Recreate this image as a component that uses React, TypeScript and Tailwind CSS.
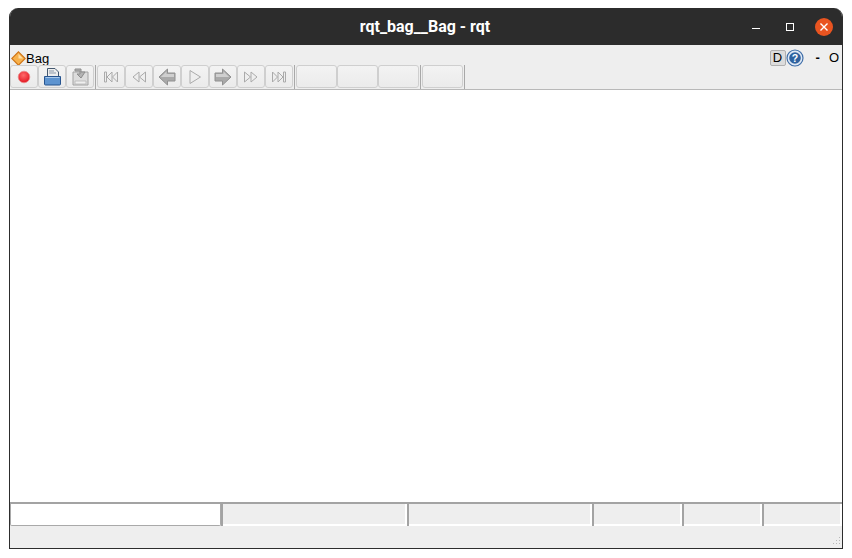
const ToolButton = ({ children, className = 'w-[28px]' }: { children?: React.ReactNode; className?: string }) => (
  <div className={`${className} h-[23px] flex items-center justify-center rounded-[3px] border border-[#cfcfcf] bg-gradient-to-b from-[#f3f3f3] to-[#ebebeb]`}>
    {children}
  </div>
);

const Separator = () => <div className="w-px h-[24px] ml-px mr-px bg-[#a8a8a8]" />;

const Bag = () => (
  <svg width="15" height="15" viewBox="0 0 15 15">
    <path d="M7.5 .8 L14.2 7.5 L7.5 14.2 L.8 7.5 Z" fill="#f7b14c" stroke="#d0761a" strokeWidth="1.2" />
    <path d="M7.5 3 L12 7.5 L7.5 7.5 Z" fill="#fde0a8" />
  </svg>
);

const Record = () => (
  <svg width="14" height="14" viewBox="0 0 14 14">
    <defs>
      <radialGradient id="rec" cx="0.45" cy="0.35" r="0.7">
        <stop offset="0" stopColor="#ff6a6a" />
        <stop offset="1" stopColor="#e0101c" />
      </radialGradient>
    </defs>
    <circle cx="7" cy="7" r="5.8" fill="url(#rec)" stroke="#e88a8a" strokeWidth="0.8" />
  </svg>
);

const OpenFile = () => (
  <svg width="17" height="18" viewBox="0 0 17 18">
    <path d="M3.5 .5 H11 L14.5 4 V10 H3.5 Z" fill="#eeeeee" stroke="#44586f" strokeWidth="1" />
    <path d="M5 3 H10 M5 5 H12" stroke="#8b98a8" strokeWidth="1" />
    <path d="M.5 8.5 H16.5 V16 Q16.5 17 15.5 17 H1.5 Q.5 17 .5 16 Z" fill="#5e94d0" stroke="#27548f" strokeWidth="1" />
    <path d="M1.5 9.5 H15.5" stroke="#a8c8ea" strokeWidth="1" />
  </svg>
);

const SaveFile = () => (
  <svg width="17" height="18" viewBox="0 0 17 18">
    <path d="M1 4 H16 V17 H1 Z" fill="#dcdcdc" stroke="#a2a2a2" strokeWidth="1" />
    <path d="M3 13 H14 V16 H3 Z" fill="#efefef" stroke="#b6b6b6" strokeWidth="0.8" />
    <path d="M3 1 H9 V4 H13 L9 10 L5 6 H8 V3 H3 Z" fill="#b4b4b4" stroke="#8c8c8c" strokeWidth="1" />
  </svg>
);

const Transport = ({ name }: { name: string }) => {
  const line = { fill: '#eeeeee', stroke: '#aaaaaa', strokeWidth: 1 };
  return (
    <svg width="16" height="16" viewBox="0 0 16 16">
      {name === 'first' && (
        <>
          <path d="M1.5 3 H3.5 V13 H1.5 Z" {...line} />
          <path d="M9 3 L4 8 L9 13 Z" {...line} />
          <path d="M14.5 3 L9.5 8 L14.5 13 Z" {...line} />
        </>
      )}
      {name === 'rewind' && (
        <>
          <path d="M8 3 L2 8 L8 13 Z" {...line} />
          <path d="M14.5 3 L8.5 8 L14.5 13 Z" {...line} />
        </>
      )}
      {name === 'play' && <path d="M3 1.5 L13.5 8 L3 14.5 Z" {...line} />}
      {name === 'fast' && (
        <>
          <path d="M1.5 3 L7.5 8 L1.5 13 Z" {...line} />
          <path d="M8 3 L14 8 L8 13 Z" {...line} />
        </>
      )}
      {name === 'last' && (
        <>
          <path d="M1.5 3 L6.5 8 L1.5 13 Z" {...line} />
          <path d="M7 3 L12 8 L7 13 Z" {...line} />
          <path d="M12.5 3 H14.5 V13 H12.5 Z" {...line} />
        </>
      )}
    </svg>
  );
};

const BigArrow = ({ flip }: { flip?: boolean }) => (
  <svg width="18" height="18" viewBox="0 0 18 18" className={flip ? '-scale-x-100' : ''}>
    <path d="M1 9 L9.5 1 V5 H17 V13 H9.5 V17 Z" fill="#a9a9a9" stroke="#909090" strokeWidth="1" />
    <path d="M8.5 3.5 L2.8 9 H16 V6 H8.5 Z" fill="#cfcfcf" />
  </svg>
);

const Help = () => (
  <svg width="18" height="18" viewBox="0 0 18 18">
    <circle cx="9" cy="9" r="8" fill="#dfe8f4" stroke="#3f6ea8" strokeWidth="1.2" />
    <circle cx="9" cy="9" r="5.8" fill="#2f629f" />
    <text x="9" y="12.6" textAnchor="middle" fontSize="10.5" fontWeight="700" fill="#ffffff" fontFamily="Liberation Sans, sans-serif">?</text>
  </svg>
);

const StatusCell = ({ width }: { width: string }) => (
  <div className={`${width} h-full flex`}>
    <div className="w-[2px] bg-[#a3a3a3]" />
    <div className="flex-1 bg-[#eeeeee] border-b-2 border-r-2 border-white" />
  </div>
);

export default function App() {
  return (
    <div className="w-[852px] h-[558px] bg-white pt-[8px] pl-[9px]" style={{ fontFamily: '"Liberation Sans", sans-serif' }}>
      <div className="w-[834px] h-[541px] flex flex-col rounded-t-[9px] overflow-hidden bg-[#eeeeee] border-x border-b border-[#2d2d2d]">
        <div className="h-[37px] shrink-0 bg-[#2c2c2c] flex items-center relative">
          <span className="flex-1 text-center text-white text-[16px] font-bold pr-[2px]" style={{ fontFamily: 'Roboto, sans-serif' }}>rqt_bag__Bag - rqt</span>
          <div className="absolute right-[9px] top-0 h-full flex items-center">
            <div className="w-[8px] h-px bg-white mr-[26px] mt-[3px]" />
            <div className="w-[8px] h-[8px] border border-white mr-[21px]" />
            <div className="w-[18px] h-[18px] rounded-full bg-[#e95420] flex items-center justify-center">
              <svg width="10" height="10" viewBox="0 0 10 10">
                <path d="M1.5 1.5 L8.5 8.5 M8.5 1.5 L1.5 8.5" stroke="#fff" strokeWidth="1.4" />
              </svg>
            </div>
          </div>
        </div>
        <div className="h-[20px] shrink-0 flex items-center pl-px pt-[6px] text-[13px] text-black">
          <Bag />
          <span className="leading-none">Bag</span>
          <div className="ml-auto flex items-center mr-[3px]">
            <div className="w-[16px] h-[16px] rounded-[2px] border border-[#b0b0b0] bg-[#dcdcdc] flex items-center justify-center text-[13px]">D</div>
            <Help />
            <span className="ml-[12px] text-[13px] font-bold">-</span>
            <span className="ml-[9px] text-[13px]">O</span>
          </div>
        </div>
        <div className="h-[24px] shrink-0 flex items-start">
          <ToolButton><Record /></ToolButton>
          <ToolButton><OpenFile /></ToolButton>
          <ToolButton><SaveFile /></ToolButton>
          <Separator />
          <ToolButton><Transport name="first" /></ToolButton>
          <ToolButton><Transport name="rewind" /></ToolButton>
          <ToolButton><BigArrow /></ToolButton>
          <ToolButton><Transport name="play" /></ToolButton>
          <ToolButton><BigArrow flip /></ToolButton>
          <ToolButton><Transport name="fast" /></ToolButton>
          <ToolButton><Transport name="last" /></ToolButton>
          <Separator />
          <ToolButton className="w-[41px]" />
          <ToolButton className="w-[41px]" />
          <ToolButton className="w-[41px]" />
          <Separator />
          <ToolButton className="w-[41px]" />
          <Separator />
        </div>
        <div className="flex-1 bg-white border-t border-[#b8b8b8]" />
        <div className="h-[24px] shrink-0 border-t-2 border-[#a3a3a3] flex">
          <div className="w-[211px] h-full bg-white border-x border-b border-[#a9a9a9] rounded-b-[2px]" />
          <StatusCell width="w-[186px]" />
          <StatusCell width="w-[185px]" />
          <StatusCell width="w-[90px]" />
          <StatusCell width="w-[80px]" />
          <StatusCell width="w-[80px]" />
        </div>
        <div className="h-[22px] shrink-0 relative">
          <svg width="12" height="12" viewBox="0 0 12 12" className="absolute right-0 bottom-0">
            <g fill="#b8b8b8">
              <rect x="9" y="1" width="1" height="1" />
              <rect x="6" y="4" width="1" height="1" />
              <rect x="9" y="4" width="1" height="1" />
              <rect x="3" y="7" width="1" height="1" />
              <rect x="6" y="7" width="1" height="1" />
              <rect x="9" y="7" width="1" height="1" />
            </g>
          </svg>
        </div>
      </div>
    </div>
  );
}
